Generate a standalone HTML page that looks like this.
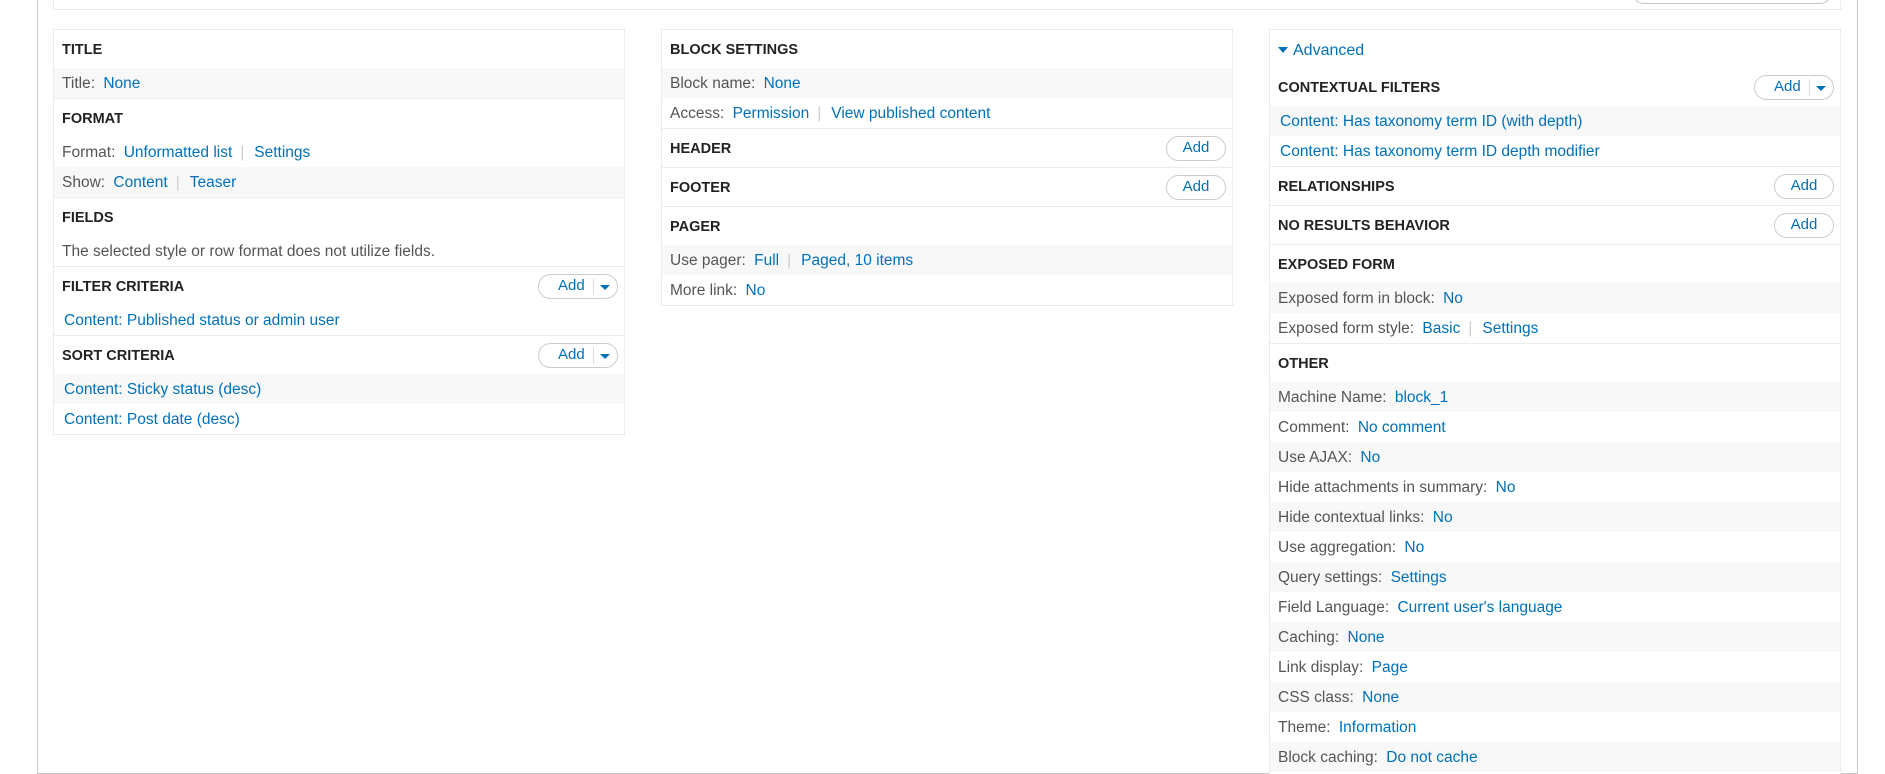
<!DOCTYPE html>
<html><head><meta charset="utf-8">
<style>
*{box-sizing:border-box;margin:0;padding:0}
html,body{width:1885px;height:774px;overflow:hidden;background:#fff;font-family:"Liberation Sans",Arial,sans-serif;font-size:15.5px;color:#555}
.vl{position:absolute;top:0;width:1px;height:774px;background:#c8c8c8}
.bl{position:absolute;left:37px;width:1821px;top:773px;height:1px;background:#c8c8c8}
.top{position:absolute;left:53px;width:1788px;top:-5px;height:15px;border:1px solid #ececec;border-top:none}
.topbtn{position:absolute;left:1632px;width:200px;top:-20px;height:24px;border:1px solid #c8c8c8;border-radius:12px}
.col{position:absolute;top:29px;width:572px;border:1px solid #ececec;border-bottom:none;background:#fff}
.sec{border-bottom:1px solid #ececec}
.h{height:38px;line-height:41px;padding-left:8px;font-weight:bold;color:#222;text-transform:uppercase;position:relative;font-size:14.5px}
.r{height:30px;line-height:31px;padding-left:8px;white-space:nowrap}
.g{background:#f8f8f8}
a{color:#0071b8;text-decoration:none}
.lk{padding-left:10px}
.sep{color:#ccc;margin:0 10px 0 8px}
.lab{margin-right:4px}
.btn{position:absolute;right:6px;top:7px;height:25px;border:1px solid #ccc;border-radius:13px;background:#fff;font-weight:normal;text-transform:none;color:#0071b8;line-height:22px;font-size:15px}
.b1{width:60px;text-align:center}
.b2{width:80px}
.b2 span{position:absolute;left:19px}
.b2 i{position:absolute;left:54px;top:3px;width:1px;height:17px;background:#ddd}
.b2 b{position:absolute;left:61px;top:10px;border-left:5px solid transparent;border-right:5px solid transparent;border-top:5px solid #0071b8}
.adv{height:38px;line-height:42px;padding-left:8px;color:#0071b8;font-size:16px}
.adv b{display:inline-block;border-left:5.5px solid transparent;border-right:5.5px solid transparent;border-top:6px solid #0071b8;margin-right:5px;vertical-align:2px}
</style></head><body>
<div class="vl" style="left:37px"></div>
<div class="vl" style="left:1857px"></div>
<div class="bl"></div>
<div class="top"></div>
<div class="topbtn"></div>

<div class="col" style="left:53px">
 <div class="sec"><div class="h">Title</div><div class="r g"><span class="lab">Title:</span> <a>None</a></div></div>
 <div class="sec"><div class="h">Format</div><div class="r"><span class="lab">Format:</span> <a>Unformatted list</a><span class="sep">|</span><a>Settings</a></div><div class="r g"><span class="lab">Show:</span> <a>Content</a><span class="sep">|</span><a>Teaser</a></div></div>
 <div class="sec"><div class="h">Fields</div><div class="r">The selected style or row format does not utilize fields.</div></div>
 <div class="sec"><div class="h">Filter criteria<div class="btn b2"><span>Add</span><i></i><b></b></div></div><div class="r lk"><a>Content: Published status or admin user</a></div></div>
 <div class="sec"><div class="h">Sort criteria<div class="btn b2"><span>Add</span><i></i><b></b></div></div><div class="r g lk"><a>Content: Sticky status (desc)</a></div><div class="r lk"><a>Content: Post date (desc)</a></div></div>
</div>

<div class="col" style="left:661px">
 <div class="sec"><div class="h">Block settings</div><div class="r g"><span class="lab">Block name:</span> <a>None</a></div><div class="r"><span class="lab">Access:</span> <a>Permission</a><span class="sep">|</span><a>View published content</a></div></div>
 <div class="sec"><div class="h">Header<div class="btn b1">Add</div></div></div>
 <div class="sec"><div class="h">Footer<div class="btn b1">Add</div></div></div>
 <div class="sec"><div class="h">Pager</div><div class="r g"><span class="lab">Use pager:</span> <a>Full</a><span class="sep">|</span><a>Paged, 10 items</a></div><div class="r"><span class="lab">More link:</span> <a>No</a></div></div>
</div>

<div class="col" style="left:1269px;height:745px">
 <div class="adv"><b></b>Advanced</div>
 <div class="sec"><div class="h">Contextual filters<div class="btn b2"><span>Add</span><i></i><b></b></div></div><div class="r g lk"><a>Content: Has taxonomy term ID (with depth)</a></div><div class="r lk"><a>Content: Has taxonomy term ID depth modifier</a></div></div>
 <div class="sec"><div class="h">Relationships<div class="btn b1">Add</div></div></div>
 <div class="sec"><div class="h">No results behavior<div class="btn b1">Add</div></div></div>
 <div class="sec"><div class="h">Exposed form</div><div class="r g"><span class="lab">Exposed form in block:</span> <a>No</a></div><div class="r"><span class="lab">Exposed form style:</span> <a>Basic</a><span class="sep">|</span><a>Settings</a></div></div>
 <div><div class="h">Other</div>
  <div class="r g"><span class="lab">Machine Name:</span> <a>block_1</a></div>
  <div class="r"><span class="lab">Comment:</span> <a>No comment</a></div>
  <div class="r g"><span class="lab">Use AJAX:</span> <a>No</a></div>
  <div class="r"><span class="lab">Hide attachments in summary:</span> <a>No</a></div>
  <div class="r g"><span class="lab">Hide contextual links:</span> <a>No</a></div>
  <div class="r"><span class="lab">Use aggregation:</span> <a>No</a></div>
  <div class="r g"><span class="lab">Query settings:</span> <a>Settings</a></div>
  <div class="r"><span class="lab">Field Language:</span> <a>Current user's language</a></div>
  <div class="r g"><span class="lab">Caching:</span> <a>None</a></div>
  <div class="r"><span class="lab">Link display:</span> <a>Page</a></div>
  <div class="r g"><span class="lab">CSS class:</span> <a>None</a></div>
  <div class="r"><span class="lab">Theme:</span> <a>Information</a></div>
  <div class="r g"><span class="lab">Block caching:</span> <a>Do not cache</a></div>
 </div>
</div>
</body></html>
